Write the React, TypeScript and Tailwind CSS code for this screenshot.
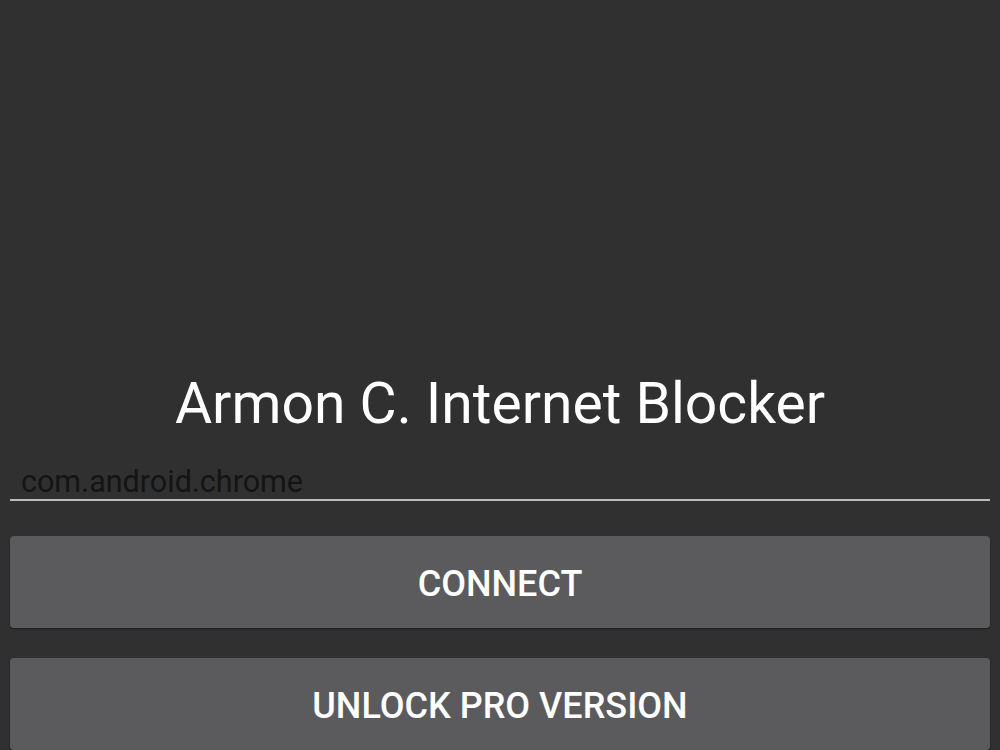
export default function App() {
  return (
    <div
      className="h-[750px] overflow-hidden bg-[#303030] px-[10px] pt-[370px]"
      style={{ fontFamily: "Roboto, 'Noto Sans', sans-serif" }}
    >
      <div className="text-center text-[57px] leading-[67px] text-white">Armon C. Internet Blocker</div>
      <div className="mt-[27px] box-content h-[35px] border-b-2 border-[#bdbdbd] pl-[11px] text-[30.5px] leading-[36px] text-[#141414]">
        com.android.chrome
      </div>
      <button className="mt-[35px] flex h-[92px] w-full items-center justify-center rounded-[4px] bg-[#5b5b5d] pt-[4px] text-[36px] font-medium text-white shadow-[0_1px_2px_rgba(0,0,0,0.4)]">
        CONNECT
      </button>
      <button className="mt-[30px] flex h-[92px] w-full items-center justify-center rounded-[4px] bg-[#5b5b5d] pt-[4px] text-[36px] font-medium text-white shadow-[0_1px_2px_rgba(0,0,0,0.4)]">
        UNLOCK PRO VERSION
      </button>
    </div>
  );
}
